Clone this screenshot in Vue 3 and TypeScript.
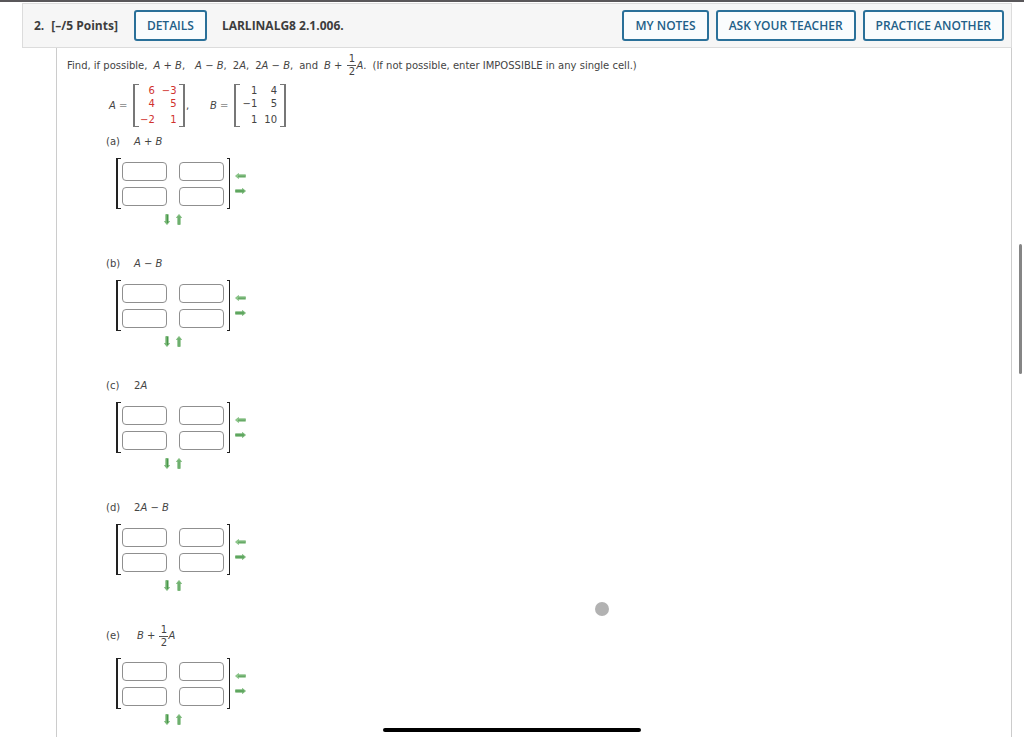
<script setup lang="ts">
interface Part {
  id: string
  lead: string
  leadItalic: boolean
  tail: string
  fraction?: boolean
}

const parts: Part[] = [
  { id: 'a', lead: 'A', leadItalic: true, tail: ' + B' },
  { id: 'b', lead: 'A', leadItalic: true, tail: ' − B' },
  { id: 'c', lead: '2', leadItalic: false, tail: 'A' },
  { id: 'd', lead: '2', leadItalic: false, tail: 'A − B' },
  { id: 'e', lead: 'B', leadItalic: true, tail: ' +', fraction: true },
]

const matrixA: string[][] = [['6', '−3'], ['4', '5'], ['−2', '1']]
const matrixB: string[][] = [['1', '4'], ['−1', '5'], ['1', '10']]
const cells: string[] = ['row 1 column 1', 'row 1 column 2', 'row 2 column 1', 'row 2 column 2']
</script>

<template>
  <div class="page">
    <header class="bar">
      <span class="points"><span>2.</span><span>[–/5 Points]</span></span>
      <button type="button" class="btn">DETAILS</button>
      <span class="code">LARLINALG8 2.1.006.</span>
      <div class="actions">
        <button type="button" class="btn">MY NOTES</button>
        <button type="button" class="btn">ASK YOUR TEACHER</button>
        <button type="button" class="btn">PRACTICE ANOTHER</button>
      </div>
    </header>

    <main class="question">
      <p class="prompt">
        <span class="intro">Find, if possible,</span>
        <span class="t1"><i>A</i> + <i>B</i>,</span>
        <span class="t2"><i>A</i> − <i>B</i>,</span>
        <span class="t3">2<i>A</i>,</span>
        <span class="t3">2<i>A</i> − <i>B</i>,</span>
        <span class="t3">and</span>
        <span class="t4"><i>B</i> +</span>
        <span class="frac"><span>1</span><span>2</span></span>
        <span><i>A</i>.</span>
        <span class="note">(If not possible, enter IMPOSSIBLE in any single cell.)</span>
      </p>

      <div class="given">
        <span class="name"><i>A</i> <span class="eq">=</span></span>
        <div class="matrix">
          <table class="red">
            <tbody>
              <tr v-for="(row, r) in matrixA" :key="r"><td v-for="(n, c) in row" :key="c">{{ n }}</td></tr>
            </tbody>
          </table>
        </div>
        <span class="comma">,</span>
        <span class="name"><i>B</i> <span class="eq">=</span></span>
        <div class="matrix">
          <table>
            <tbody>
              <tr v-for="(row, r) in matrixB" :key="r"><td v-for="(n, c) in row" :key="c">{{ n }}</td></tr>
            </tbody>
          </table>
        </div>
      </div>

      <section v-for="p in parts" :key="p.id" class="part">
        <div class="label" :class="{ tall: p.fraction }">
          <span class="letter">({{ p.id }})</span>
          <span class="expr"><i v-if="p.leadItalic">{{ p.lead }}</i><template v-else>{{ p.lead }}</template><i>{{ p.tail }}</i></span>
          <template v-if="p.fraction">
            <span class="frac"><span>1</span><span>2</span></span>
            <i>A</i>
          </template>
        </div>
        <div class="answer">
          <div class="entry">
            <input v-for="cell in cells" :key="cell" type="text" :aria-label="`Part ${p.id}, ${cell}`" />
          </div>
          <div class="cols">
            <button type="button" class="arrow" aria-label="Remove column">
              <svg width="11" height="6" viewBox="0 0 11 6"><path d="M.5 3 3.5.5v1.300h7v2.400h-7v1.300z" fill="#8fca8b" stroke="#74b572" stroke-width=".7" /><path d="M3 3.200h7" stroke="#4c9350" stroke-width=".8" /></svg>
            </button>
            <button type="button" class="arrow" aria-label="Add column">
              <svg width="11" height="6" viewBox="0 0 11 6"><path d="M10.500 3 7.500.5v1.300h-7v2.400h7v1.300z" fill="#7dbd79" stroke="#5fa75f" stroke-width=".7" /><path d="M1 3h8" stroke="#3d8c43" stroke-width=".8" /></svg>
            </button>
          </div>
        </div>
        <div class="rows">
          <button type="button" class="arrow" aria-label="Add row">
            <svg width="6" height="11" viewBox="0 0 6 11"><path d="M3 10.500.5 7.500h1.300v-7h2.400v7h1.300z" fill="#7dbd79" stroke="#5fa75f" stroke-width=".7" /><path d="M3.400 1v8" stroke="#3d8c43" stroke-width=".9" /></svg>
          </button>
          <button type="button" class="arrow" aria-label="Remove row">
            <svg width="6" height="11" viewBox="0 0 6 11"><path d="M3 .5.5 3.500h1.300v7h2.400v-7h1.300z" fill="#8fca8b" stroke="#5fa75f" stroke-width=".7" /><path d="M3 2v8" stroke="#4c9350" stroke-width=".8" /></svg>
          </button>
        </div>
      </section>
    </main>

    <div class="pointer"></div>
    <div class="scroll-thumb"></div>
    <div class="home-bar"></div>
  </div>
</template>

<style>
body {
  margin: 0;
  background: #fff;
}
</style>

<style scoped>
* {
  box-sizing: border-box;
}
.page {
  position: relative;
  display: flex;
  flex-direction: column;
  height: 100vh;
  overflow: hidden;
  padding: 1px 12px 0 22px;
  border-top: 2px solid #59575a;
  color: #444;
  font: 10px/14px "DejaVu Sans", Verdana, sans-serif;
}
.bar {
  display: flex;
  flex: none;
  align-items: center;
  height: 45px;
  padding: 0 7px 0 11px;
  border: 1px solid #dcdcdc;
  background: #f6f6f6;
  color: #3d3d3d;
  font: 700 12px/16px "Open Sans", sans-serif;
  white-space: nowrap;
}
.points {
  display: flex;
  gap: 7px;
  margin-right: 16px;
}
.code {
  margin-left: 15px;
}
.actions {
  display: flex;
  gap: 7px;
  margin-left: auto;
}
.btn {
  height: 31px;
  padding: 0 11px;
  border: 2px solid #2a7099;
  border-radius: 3px;
  background: #fafcfd;
  color: #225f88;
  font: 600 12px/16px "Open Sans", sans-serif;
}
.question {
  flex: 1 0 auto;
  margin-left: 34px;
  padding: 5px 10px 0;
  border: solid #ccc;
  border-width: 0 1px;
}
.prompt {
  display: flex;
  align-items: center;
  height: 25px;
  margin: 0;
  white-space: nowrap;
}
.t1,
.t3 {
  margin-right: 6px;
}
.intro {
  margin-right: 6px;
}
.t2 {
  margin: 0 6px 0 4px;
}
.t4 {
  margin-right: 5px;
}
.note {
  margin-left: 6px;
}
.frac {
  display: inline-flex;
  flex-direction: column;
  align-items: center;
  width: 9px;
  line-height: 12px;
}
.frac span + span {
  width: 100%;
  border-top: 1px solid #555;
  text-align: center;
}
.given {
  display: flex;
  align-items: center;
  height: 43px;
  margin: 6px 0 8px 42px;
}
.name {
  width: 24px;
  white-space: nowrap;
}
.eq {
  color: #999;
}
.matrix {
  position: relative;
  width: 52px;
  height: 43px;
  padding-right: 9px;
}
.matrix::before,
.matrix::after {
  content: "";
  position: absolute;
  top: 0;
  bottom: 0;
  width: 4px;
  border: 1px solid #777;
}
.matrix::before {
  left: 0;
  border-width: 1px 0 1px 2px;
}
.matrix::after {
  right: 0;
  border-width: 1px 2px 1px 0;
}
.matrix table {
  margin-left: auto;
  border-collapse: collapse;
}
.matrix td {
  padding: 0 0 0 7px;
  line-height: 13px;
  text-align: right;
}
.matrix tr:last-child td {
  padding-top: 3px;
}
.red {
  color: #d0312d;
}
.comma {
  width: 25px;
  padding-left: 1px;
}
.part {
  display: flex;
  flex-direction: column;
  align-items: flex-start;
  padding-left: 39px;
  margin-bottom: 32px;
}
.label {
  display: flex;
  align-items: center;
  height: 14px;
  margin-bottom: 9px;
}
.label.tall {
  height: 26px;
}
.letter {
  width: 28px;
}
.tall .letter {
  width: 31px;
}
.expr {
  white-space: pre;
}
.tall .frac {
  margin-left: 4px;
}
.answer {
  display: flex;
  align-items: center;
  gap: 5px;
  margin-left: 10px;
}
.entry {
  position: relative;
  display: grid;
  grid-template-columns: 45px 45px;
  gap: 6px 12px;
  width: 114px;
  padding: 4px 6px 3px;
}
.entry::before,
.entry::after {
  content: "";
  position: absolute;
  top: 0;
  bottom: 0;
  width: 3px;
  border: 1px solid #222;
}
.entry::before {
  left: 0;
  border-width: 1px 0 1px 2px;
}
.entry::after {
  right: 0;
  width: 2px;
  border-left-width: 0;
}
.entry input {
  width: 45px;
  height: 19px;
  padding: 0 4px;
  border: 1px solid #8f8f8f;
  border-radius: 4px;
  background: #fff;
  font: inherit;
}
.cols {
  display: flex;
  flex-direction: column;
  gap: 9px;
}
.rows {
  display: flex;
  gap: 6px;
  margin: 5px 0 0 58px;
}
.arrow {
  display: block;
  padding: 0;
  border: 0;
  background: none;
}
.arrow svg {
  display: block;
}
.pointer {
  position: absolute;
  top: 600px;
  left: 595px;
  width: 14px;
  height: 14px;
  border-radius: 50%;
  background: #b2b2b2;
}
.scroll-thumb {
  position: absolute;
  top: 242px;
  right: 2px;
  width: 3px;
  height: 130px;
  border-radius: 2px;
  background: #858585;
}
.home-bar {
  position: absolute;
  bottom: 5px;
  left: 50%;
  width: 258px;
  height: 4px;
  margin-left: -129px;
  border-radius: 2px;
  background: #000;
}
</style>
